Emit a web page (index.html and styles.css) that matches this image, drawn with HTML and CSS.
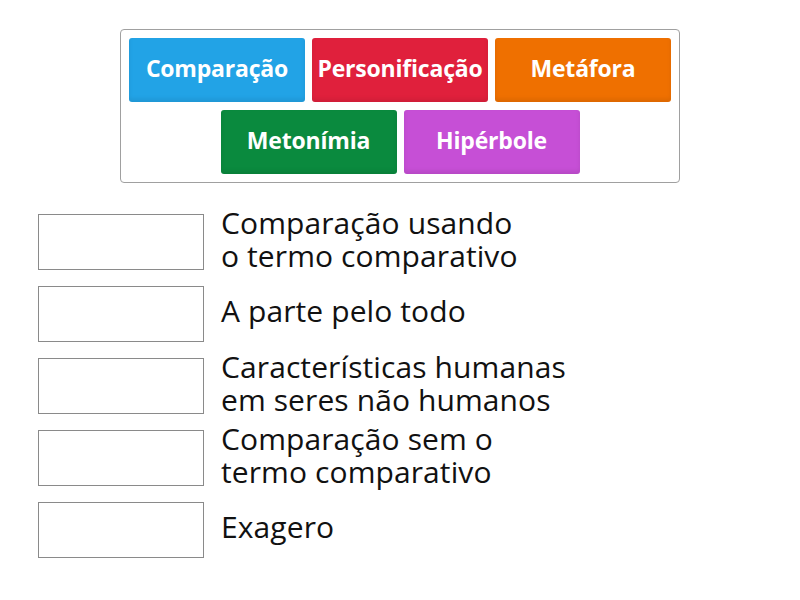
FILE: index.html
```html
<!DOCTYPE html>
<html lang="pt">
<head>
  <meta charset="UTF-8" />
  <title>Figuras de linguagem</title>
  <link rel="stylesheet" href="styles.css">
</head>
<body>

  <div class="bank">
    <div class="tile blue">Comparação</div>
    <div class="tile red">Personificação</div>
    <div class="tile orange">Metáfora</div>
    <div class="tile green">Metonímia</div>
    <div class="tile purple">Hipérbole</div>
  </div>

  <div class="rows">
    <div class="row">
      <div class="slot"></div>
      <div class="label">Comparação usando<br>o termo comparativo</div>
    </div>
    <div class="row">
      <div class="slot"></div>
      <div class="label">A parte pelo todo</div>
    </div>
    <div class="row">
      <div class="slot"></div>
      <div class="label">Características humanas<br>em seres não humanos</div>
    </div>
    <div class="row">
      <div class="slot"></div>
      <div class="label">Comparação sem o<br>termo comparativo</div>
    </div>
    <div class="row">
      <div class="slot"></div>
      <div class="label">Exagero</div>
    </div>
  </div>

</body>
</html>
```

FILE: styles.css
```css
body {
  font-family: 'Open Sans', sans-serif;
  background: #fff;
  margin: 0;
  padding: 29px 0 0 38px;
  color: #111;
}

.bank {
  width: 542px;
  margin-left: 82px;
  padding: 8px;
  border: 1px solid #a0a0a0;
  border-radius: 4px;
  display: flex;
  flex-wrap: wrap;
  justify-content: center;
  gap: 8px 7px;
}

.tile {
  width: 176px;
  height: 64px;
  padding-bottom: 5px;
  box-sizing: border-box;
  border-radius: 3px;
  display: flex;
  align-items: center;
  justify-content: center;
  color: #fff;
  font-weight: bold;
  font-size: 23px;
  letter-spacing: -0.2px;
  white-space: nowrap;
  box-shadow: inset 0 -3px 4px rgba(0, 0, 0, 0.08);
}

.blue { background: #22a3e6; }
.red { background: #e0203c; }
.orange { background: #ef7000; }
.green { background: #0a8a3e; }
.purple { background: #c64fd6; }

.rows {
  margin-top: 31px;
  display: flex;
  flex-direction: column;
  gap: 16px;
}

.row {
  display: flex;
  align-items: center;
  height: 56px;
}

.slot {
  width: 164px;
  height: 54px;
  border: 1px solid #8a8a8a;
  flex-shrink: 0;
}

.label {
  margin-left: 17px;
  margin-top: -7px;
  font-size: 30px;
  line-height: 33px;
  letter-spacing: 0.1px;
  white-space: nowrap;
}
```
